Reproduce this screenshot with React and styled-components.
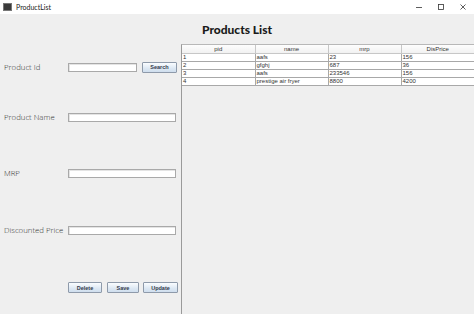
import React from 'react';
import styled, { createGlobalStyle } from 'styled-components';

const GlobalStyle = createGlobalStyle`
  html, body { margin: 0; padding: 0; }
  body { width: 474px; height: 314px; overflow: hidden; background: #fff; }
`;

const rows = [
    { id: 1, name: 'aafs', mrp: '23', dis: '156' },
    { id: 2, name: 'gfghj', mrp: '687', dis: '36' },
    { id: 3, name: 'aafs', mrp: '233546', dis: '156' },
    { id: 4, name: 'prestige air fryer', mrp: '8800', dis: '4200' },
];

const Window = styled.div`
    width: 474px;
    height: 314px;
    display: flex;
    flex-direction: column;
    font-family: Lato, "Liberation Sans", sans-serif;
`;

const TitleBar = styled.div`
    height: 14px;
    background: #ffffff;
    display: flex;
    align-items: center;
    padding-left: 3px;
    gap: 4px;
    font-size: 7px;
    color: #222;
`;

const AppIcon = styled.div`
    width: 7px;
    height: 6px;
    background: #3a3a3a;
    border: 1px solid #777;
`;

const TitleText = styled.span`
    flex: 1;
`;

const Controls = styled.div`
    display: flex;
    height: 14px;
`;

const Ctrl = styled.div`
    width: 22px;
    display: flex;
    align-items: center;
    justify-content: center;
`;

const Content = styled.div`
    flex: 1;
    background: #efefef;
    display: flex;
    flex-direction: column;
`;

const Heading = styled.h1`
    margin: 0;
    height: 29px;
    display: flex;
    align-items: center;
    justify-content: center;
    padding-top: 1px;
    font-size: 12px;
    font-weight: 900;
    color: #1a1a1a;
    font-family: Lato, "Open Sans", sans-serif;
`;

const Body = styled.div`
    flex: 1;
    display: flex;
`;

const FormPanel = styled.div`
    width: 181px;
    display: flex;
    flex-direction: column;
    padding-top: 17px;
`;

const Row = styled.div`
    display: flex;
    align-items: center;
    height: 12px;
    margin-top: ${p => p.$top || 0}px;
`;

const Label = styled.label`
    width: 63px;
    padding-left: 4px;
    box-sizing: border-box;
    font-family: "Open Sans", sans-serif;
    font-size: 7.8px;
    font-weight: 300;
    color: #333;
    white-space: nowrap;
`;

const Input = styled.div`
    box-sizing: border-box;
    width: ${p => p.$w}px;
    height: 9px;
    margin-left: 5px;
    background: #fff;
    border: 1px solid #a9a9a9;
    box-shadow: inset 1px 1px 0 #e4e4e4;
`;

const Button = styled.div`
    box-sizing: border-box;
    width: ${p => p.$w}px;
    height: 11px;
    margin-left: ${p => p.$ml || 0}px;
    border: 1px solid #8e9aaa;
    border-radius: 1px;
    background: linear-gradient(#fbfdff, #dde8f3 60%, #cfdeee);
    display: flex;
    align-items: center;
    justify-content: center;
    font-family: "Liberation Sans", sans-serif;
    font-size: 5.5px;
    font-weight: bold;
    color: #333a4a;
`;

const ButtonRow = styled.div`
    display: flex;
    margin-top: 46px;
    padding-left: 68px;
`;

const TablePanel = styled.div`
    flex: 1;
    border-left: 1px solid #9a9a9a;
    border-top: 1px solid #b8b8b8;
`;

const Table = styled.table`
    width: 100%;
    border-collapse: collapse;
    table-layout: fixed;
    font-family: "Liberation Sans", sans-serif;
    font-size: 6px;
    color: #333;
    border-bottom: 1px solid #c4c4c4;
`;

const Th = styled.th`
    height: 8px;
    padding: 0;
    font-weight: normal;
    text-align: center;
    background: linear-gradient(#fdfdfd, #f1f1f1);
    border: 1px solid #c7c7c7;
    border-top: none;
    line-height: 8px;
    &:first-child { border-left: none; }
    &:last-child { border-right: none; }
`;

const Td = styled.td`
    height: 7px;
    padding: 0 0 0 1px;
    line-height: 7px;
    background: #fff;
    border: 1px solid #a8a8a8;
    white-space: nowrap;
    overflow: hidden;
    &:first-child { border-left: none; }
    &:last-child { border-right: none; }
`;

export default function App() {
    return (
        <Window>
            <GlobalStyle />
            <TitleBar>
                <AppIcon />
                <TitleText>ProductList</TitleText>
                <Controls>
                    <Ctrl>
                        <svg width="8" height="8" viewBox="0 0 8 8"><line x1="1" y1="4.5" x2="7" y2="4.5" stroke="#333" strokeWidth="0.8" /></svg>
                    </Ctrl>
                    <Ctrl>
                        <svg width="8" height="8" viewBox="0 0 8 8"><rect x="1.5" y="1.5" width="5" height="5" fill="none" stroke="#333" strokeWidth="0.8" /></svg>
                    </Ctrl>
                    <Ctrl>
                        <svg width="8" height="8" viewBox="0 0 8 8"><path d="M1.5 1.5 L6.5 6.5 M6.5 1.5 L1.5 6.5" stroke="#333" strokeWidth="0.8" /></svg>
                    </Ctrl>
                </Controls>
            </TitleBar>
            <Content>
                <Heading>Products List</Heading>
                <Body>
                    <FormPanel>
                        <Row>
                            <Label>Product Id</Label>
                            <Input $w={69} />
                            <Button $w={35} $ml={5}>Search</Button>
                        </Row>
                        <Row $top={38}>
                            <Label>Product Name</Label>
                            <Input $w={108} />
                        </Row>
                        <Row $top={44}>
                            <Label>MRP</Label>
                            <Input $w={108} />
                        </Row>
                        <Row $top={45}>
                            <Label>Discounted Price</Label>
                            <Input $w={108} />
                        </Row>
                        <ButtonRow>
                            <Button $w={34}>Delete</Button>
                            <Button $w={32} $ml={5}>Save</Button>
                            <Button $w={35} $ml={4}>Update</Button>
                        </ButtonRow>
                    </FormPanel>
                    <TablePanel>
                        <Table>
                            <thead>
                                <tr>
                                    <Th>pid</Th>
                                    <Th>name</Th>
                                    <Th>mrp</Th>
                                    <Th>DisPrice</Th>
                                </tr>
                            </thead>
                            <tbody>
                                {rows.map((r) => (
                                    <tr key={r.id}>
                                        <Td>{r.id}</Td>
                                        <Td>{r.name}</Td>
                                        <Td>{r.mrp}</Td>
                                        <Td>{r.dis}</Td>
                                    </tr>
                                ))}
                            </tbody>
                        </Table>
                    </TablePanel>
                </Body>
            </Content>
        </Window>
    );
}
